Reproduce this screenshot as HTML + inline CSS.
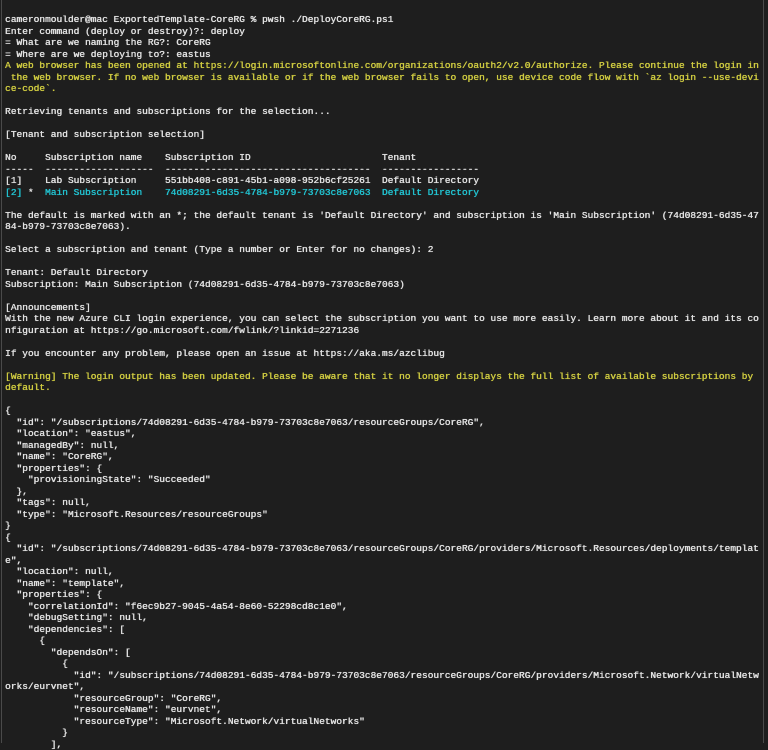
<!DOCTYPE html>
<html><head><meta charset="utf-8"><style>
html,body{margin:0;padding:0;background:#1e1e1e;}
body{width:768px;height:743px;overflow:hidden;position:relative;}
.bl{position:absolute;left:1px;top:0;bottom:0;width:1px;background:#4a4a4a;}
.br{position:absolute;left:763px;top:0;bottom:0;width:1px;background:#4a4a4a;}
pre{margin:0;position:absolute;left:5px;top:14px;font-family:"Liberation Mono",monospace;font-size:9.53px;line-height:11.5px;color:#e0e0e0;white-space:pre;text-shadow:0 0 0.5px currentColor,0.3px 0 0 currentColor;}
.y{color:#cdc940;}
.c{color:#22c0ce;}
</style></head><body>
<div class="bl"></div><div class="br"></div>
<pre>cameronmoulder@mac ExportedTemplate-CoreRG % pwsh ./DeployCoreRG.ps1
Enter command (deploy or destroy)?: deploy
= What are we naming the RG?: CoreRG
= Where are we deploying to?: eastus
<span class="y">A web browser has been opened at https://login.microsoftonline.com/organizations/oauth2/v2.0/authorize. Please continue the login in
 the web browser. If no web browser is available or if the web browser fails to open, use device code flow with `az login --use-devi
ce-code`.</span>

Retrieving tenants and subscriptions for the selection...

[Tenant and subscription selection]

No     Subscription name    Subscription ID                       Tenant
-----  -------------------  ------------------------------------  -----------------
[1]    Lab Subscription     551bb408-c891-45b1-a098-952b6cf25261  Default Directory
<span class="c">[2] <span style="color:#e0e0e0">*</span>  Main Subscription    74d08291-6d35-4784-b979-73703c8e7063  Default Directory</span>

The default is marked with an *; the default tenant is 'Default Directory' and subscription is 'Main Subscription' (74d08291-6d35-47
84-b979-73703c8e7063).

Select a subscription and tenant (Type a number or Enter for no changes): 2

Tenant: Default Directory
Subscription: Main Subscription (74d08291-6d35-4784-b979-73703c8e7063)

[Announcements]
With the new Azure CLI login experience, you can select the subscription you want to use more easily. Learn more about it and its co
nfiguration at https://go.microsoft.com/fwlink/?linkid=2271236

If you encounter any problem, please open an issue at https://aka.ms/azclibug

<span class="y">[Warning] The login output has been updated. Please be aware that it no longer displays the full list of available subscriptions by
default.</span>

{
  "id": "/subscriptions/74d08291-6d35-4784-b979-73703c8e7063/resourceGroups/CoreRG",
  "location": "eastus",
  "managedBy": null,
  "name": "CoreRG",
  "properties": {
    "provisioningState": "Succeeded"
  },
  "tags": null,
  "type": "Microsoft.Resources/resourceGroups"
}
{
  "id": "/subscriptions/74d08291-6d35-4784-b979-73703c8e7063/resourceGroups/CoreRG/providers/Microsoft.Resources/deployments/templat
e",
  "location": null,
  "name": "template",
  "properties": {
    "correlationId": "f6ec9b27-9045-4a54-8e60-52298cd8c1e0",
    "debugSetting": null,
    "dependencies": [
      {
        "dependsOn": [
          {
            "id": "/subscriptions/74d08291-6d35-4784-b979-73703c8e7063/resourceGroups/CoreRG/providers/Microsoft.Network/virtualNetw
orks/eurvnet",
            "resourceGroup": "CoreRG",
            "resourceName": "eurvnet",
            "resourceType": "Microsoft.Network/virtualNetworks"
          }
        ],
</pre>
</body></html>
